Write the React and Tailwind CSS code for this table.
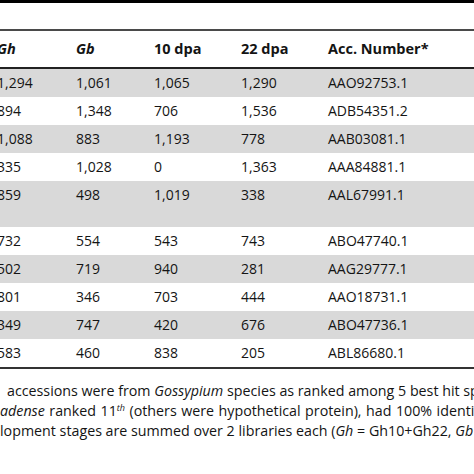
import React from "react";

const ROWS = [
  ["1,294", "1,061", "1,065", "1,290", "AAO92753.1"],
  ["894", "1,348", "706", "1,536", "ADB54351.2"],
  ["1,088", "883", "1,193", "778", "AAB03081.1"],
  ["335", "1,028", "0", "1,363", "AAA84881.1"],
  ["859", "498", "1,019", "338", "AAL67991.1", true],
  ["732", "554", "543", "743", "ABO47740.1"],
  ["502", "719", "940", "281", "AAG29777.1"],
  ["801", "346", "703", "444", "AAO18731.1"],
  ["349", "747", "420", "676", "ABO47736.1"],
  ["583", "460", "838", "205", "ABL86680.1"],
];

const cols = "grid grid-cols-[79px_78px_87px_87px_1fr] ml-[-3px]";

const App = () => {
  return (
    <div
      className="w-[474px] h-[474px] overflow-hidden bg-white text-[#141414] text-[14px]"
      style={{ fontFamily: '"Open Sans", "Noto Sans", sans-serif' }}
    >
      {/* top rules */}
      <div className="h-[3px] bg-black" />
      <div className="h-[26px]" />
      <div className="h-[1.5px] bg-[#4a4a4a]" />

      {/* header */}
      <div className={`${cols} h-[36px] items-center font-bold text-[14.5px]`}>
        <div className="italic">Gh</div>
        <div className="italic">Gb</div>
        <div>10 dpa</div>
        <div>22 dpa</div>
        <div>Acc. Number*</div>
      </div>
      <div className="h-[2px] bg-[#222]" />

      {/* body */}
      {ROWS.map((row, i) => (
        <div
          key={i}
          className={`${cols} ${row[5] ? "h-[46px]" : "h-[28px]"} ${
            i % 2 === 0 ? "bg-[#d9d9d9]" : "bg-white"
          }`}
        >
          {row.slice(0, 5).map((cell, j) => (
            <div key={j} className="h-[28px] leading-[28px]">
              {cell}
            </div>
          ))}
        </div>
      ))}
      <div className="h-[2px] bg-[#333]" />

      {/* footnote */}
      <div className="mt-[12px] leading-[20px] whitespace-nowrap text-[14.25px]">
        <div className="pl-[7px]">
          accessions were from <i>Gossypium</i> species as ranked among 5 best hit species
        </div>
        <div className="[word-spacing:0.8px]">
          <i>adense</i> ranked 11<sup className="italic text-[9px]">th</sup> (others were hypothetical protein), had 100% identity
        </div>
        <div>
          lopment stages are summed over 2 libraries each (<i>Gh</i> = Gh10+Gh22, <i>Gb</i> = Gb10+Gb22)
        </div>
      </div>
    </div>
  );
};

export default App;
